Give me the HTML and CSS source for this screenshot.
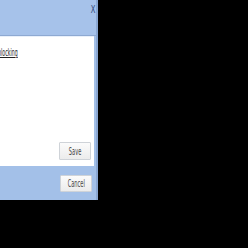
FILE: index.html
```html
<!DOCTYPE html>
<html>
<head>
<meta charset="utf-8">
<link rel="stylesheet" href="styles.css">
</head>
<body>
<div class="dialog">
  <div class="titlebar"><span class="close">X</span></div>
  <div class="content">
    <div class="link-row"><a class="link"><span class="squeeze">blocking</span></a></div>
    <div class="actions"><button class="btn"><span class="squeeze">Save</span></button></div>
  </div>
  <div class="footer"><button class="btn btn-cancel"><span class="squeeze">Cancel</span></button></div>
</div>
</body>
</html>
```
FILE: styles.css
```css
html, body {
  margin: 0;
  padding: 0;
  background: #000;
  width: 248px;
  height: 248px;
  overflow: hidden;
}
.dialog {
  width: 96px;
  height: 200px;
  background: #a3c0e8;
  border-right: 2px solid #8aa7d2;
  display: flex;
  flex-direction: column;
  font-family: "Liberation Sans Narrow", "DejaVu Sans Condensed", "Liberation Sans", sans-serif;
}
.titlebar {
  height: 35px;
  display: flex;
  justify-content: flex-end;
  align-items: flex-start;
  background: #a6c2ea;
  border-bottom: 1px solid #8ea9d2;
}
.close {
  font-size: 10px;
  color: #2e4677;
  margin-top: 4px;
  margin-right: 0;
  transform: scaleX(0.75);
}
.content {
  width: 94px;
  height: 130px;
  background: #fff;
  border-top: 1px solid #e9f0fa;
  box-sizing: border-box;
  display: flex;
  flex-direction: column;
  justify-content: space-between;
  overflow: hidden;
}
.link-row {
  padding-top: 4px;
  margin-left: -2px;
  white-space: nowrap;
}
.link {
  font-size: 10px;
  color: #222;
  text-decoration: none;
}
.squeeze {
  display: inline-block;
  transform: scaleX(0.56);
  transform-origin: center;
}
.link .squeeze {
  transform: scaleX(0.52);
  transform-origin: left center;
  text-decoration: underline;
  color: #222;
}
.actions {
  display: flex;
  justify-content: flex-end;
  padding: 0 3px 6px 0;
}
.btn {
  width: 32px;
  height: 18px;
  padding: 0;
  margin: 0;
  font-family: inherit;
  font-size: 10px;
  color: #444;
  background: linear-gradient(#fbfbfb, #ececec);
  border: 1px solid #cfd3d8;
  border-radius: 1px;
  display: flex;
  align-items: center;
  justify-content: center;
  white-space: nowrap;
}
.footer {
  flex: 1;
  display: flex;
  justify-content: flex-end;
  align-items: flex-start;
  padding: 9px 4px 0 0;
}
.btn-cancel {
  height: 17px;
}
```
